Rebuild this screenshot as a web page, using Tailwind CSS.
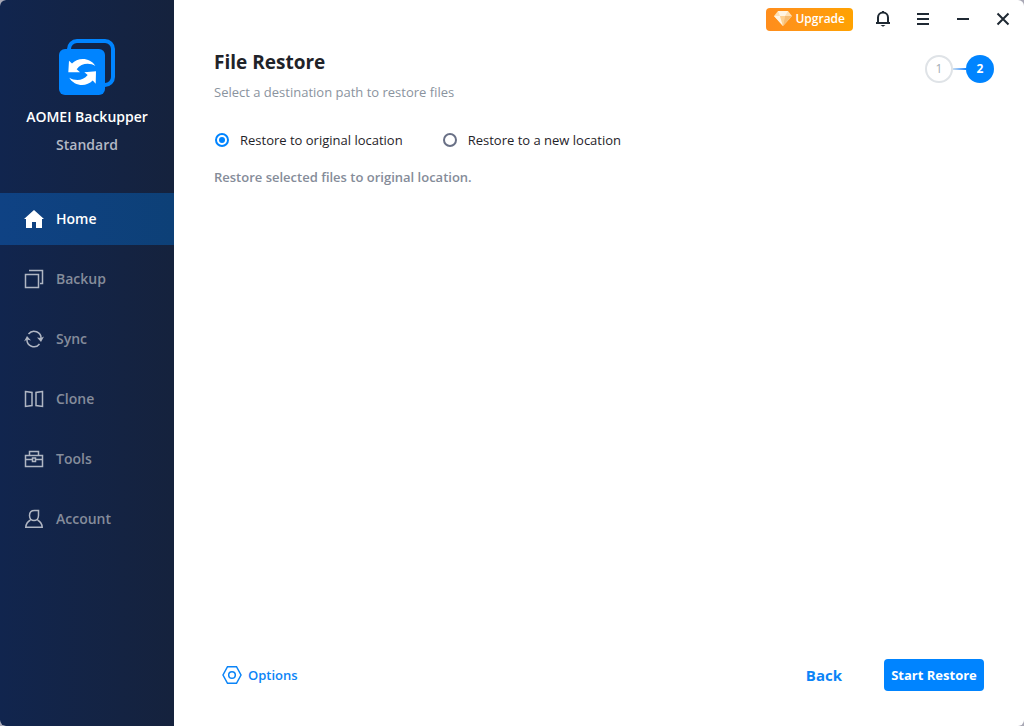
<!DOCTYPE html>
<html lang="en">
<head>
  <meta charset="UTF-8">
  <meta name="viewport" content="width=device-width, initial-scale=1">
  <title>AOMEI Backupper Standard</title>
  <script src="https://cdn.jsdelivr.net/npm/@tailwindcss/browser@4"></script>
</head>
<body class="bg-[#a9a8b5] font-['Open_Sans','Noto_Sans',sans-serif] text-sm text-[#1f2329]">
  <div class="flex min-h-screen overflow-hidden rounded-md bg-white">

    <!-- Sidebar -->
    <aside class="w-[174px] shrink-0 bg-linear-to-r from-[#11254e] to-[#15223d]">
      <div class="flex h-[193px] flex-col items-center pt-[39px]">
        <svg class="size-14" viewBox="0 0 56 56" aria-hidden="true">
          <rect x="10" y="2" width="44" height="44" rx="8" fill="none" stroke="#0084ff" stroke-width="4"/>
          <rect x="0" y="10" width="46" height="46" rx="6" fill="#0084ff"/>
          <path d="M10 21.7l3 2.8C18 18.500 31 17.500 36.300 27 31 23.500 22 24 17.700 30.300L21 33.300H9.300z" fill="#fff"/>
          <path d="M37 32.300L36.700 44.700 33.700 41.500C27 48.500 15 47 10.300 38.700 16 42 24 42 28.700 36L25.300 33.300z" fill="#fff"/>
        </svg>
        <p class="mt-3 font-semibold leading-5 text-white">AOMEI Backupper</p>
        <p class="mt-2 font-semibold leading-5 text-[#b3b9c5]">Standard</p>
      </div>

      <nav class="flex flex-col gap-2 font-semibold text-[#858c9b]">
        <a href="#" class="flex h-[52px] items-center gap-3 bg-linear-to-r from-[#0f4284] to-[#0d4077] pl-6 text-white" aria-current="page">
          <svg class="size-5" viewBox="0 0 20 20" fill="currentColor" aria-hidden="true"><path d="M10 1L0 10h2v9h6v-6h4v6h6v-9h2z"/></svg>
          Home
        </a>
        <a href="#" class="flex h-[52px] items-center gap-3 pl-6">
          <svg class="size-5 text-[#b0b6c3]" viewBox="0 0 20 20" fill="none" stroke="currentColor" aria-hidden="true"><path d="M1.500 5.500h13v13h-13zM5 1.500h13.500V14.500H16" stroke-width="1.500"/></svg>
          Backup
        </a>
        <a href="#" class="flex h-[52px] items-center gap-3 pl-6">
          <svg class="size-5 text-[#b0b6c3]" viewBox="0 0 20 20" fill="none" stroke="currentColor" aria-hidden="true"><path d="M4.500 5A7 7 0 0 1 17 10M15.500 15A7 7 0 0 1 3 10" stroke-width="1.500"/><path d="M13 8.500L17 13 20 7.500 17 9zM0 12.500L3 7 7 11.500 3 10.500z" fill="currentColor" stroke="none"/></svg>
          Sync
        </a>
        <a href="#" class="flex h-[52px] items-center gap-3 pl-6">
          <svg class="size-5 text-[#b0b6c3]" viewBox="0 0 20 20" fill="none" stroke="currentColor" aria-hidden="true"><path d="M1.500 2.500l6.500 1v13l-6.500 1zM18.500 2.500l-6.500 1v13l6.500 1z" stroke-width="1.500"/></svg>
          Clone
        </a>
        <a href="#" class="flex h-[52px] items-center gap-3 pl-6">
          <svg class="size-5 text-[#b0b6c3]" viewBox="0 0 20 20" fill="none" stroke="currentColor" aria-hidden="true"><path d="M1.500 6.500h17v11h-17zM5.500 6V2.500h9V6M2 10.500h6M12 10.500h6M8.500 9h3v3.500h-3z" stroke-width="1.500"/></svg>
          Tools
        </a>
        <a href="#" class="flex h-[52px] items-center gap-3 pl-6">
          <svg class="size-5 text-[#b0b6c3]" viewBox="0 0 20 20" fill="none" stroke="currentColor" aria-hidden="true"><path d="M14.500 1.500v5c0 3-2 5-4.500 5s-4.500-2-4.500-5 2-5 5-5zM6.500 11C3.500 12.500 2 15 1.800 18.300h16.400C18 15 16.500 12.500 13.500 11" stroke-width="1.500"/></svg>
          Account
        </a>
      </nav>
    </aside>

    <div class="flex min-w-0 flex-1 flex-col">
      <!-- Title bar -->
      <header class="flex h-[38px] items-center justify-end gap-5 pr-[11px]">
        <button class="flex h-[23px] items-center gap-[3px] rounded bg-linear-to-r from-[#ff8d1c] to-[#ffa200] px-2 text-xs font-semibold text-white">
          <svg class="h-[18px] w-[18px]" viewBox="0 0 18 18" aria-hidden="true">
            <path d="M4 1h10l4 5-9 10L0 6z" fill="#ffe0b3"/>
            <path d="M4 1h10l-3 5H6zM0 6h6l3 10z" fill="#fff4e3"/>
            <path d="M6 6h5L9 16z" fill="#ffd08f"/>
            <path d="M11 6h7L9 16z" fill="#f7bd74"/>
          </svg>
          Upgrade
        </button>
        <button class="size-5" aria-label="Notifications">
          <svg class="size-5" viewBox="0 0 20 20" fill="none" stroke="#1f2933" stroke-width="2" aria-hidden="true"><path d="M3 14h14M5 14V8.500a5 5 0 0 1 10 0V14M10 2v1.500"/><path d="M7.500 16h5l-2.500 1.800z" fill="#1f2933" stroke="none"/></svg>
        </button>
        <button class="size-5" aria-label="Menu">
          <svg class="size-5" viewBox="0 0 20 20" stroke="#1f2933" stroke-width="2" aria-hidden="true"><path d="M4 5h12M4 10h12M4 15h12"/></svg>
        </button>
        <button class="size-5" aria-label="Minimize">
          <svg class="size-5" viewBox="0 0 20 20" stroke="#1f2933" stroke-width="2" aria-hidden="true"><path d="M4 10h12"/></svg>
        </button>
        <button class="size-5" aria-label="Close">
          <svg class="size-5" viewBox="0 0 20 20" stroke="#1f2933" stroke-width="2" aria-hidden="true"><path d="M4.500 4.500l11 11M15.500 4.500l-11 11"/></svg>
        </button>
      </header>

      <main class="flex flex-1 flex-col pl-10">
        <div class="flex items-start justify-between pt-3 pr-[30px]">
          <div>
            <h1 class="text-[19px] leading-6 font-bold">File Restore</h1>
            <p class="mt-2 text-[13px] leading-5 text-[#8a939e]">Select a destination path to restore files</p>
          </div>
          <ol class="flex items-center pt-[5px] text-xs">
            <li class="flex size-7 items-center justify-center rounded-full border-2 border-[#dfe3e7] text-[#a3abb3]">1</li>
            <li class="h-[2px] w-[13px] bg-linear-to-r from-[#c5dcf0] to-[#0084ff]" aria-hidden="true"></li>
            <li class="flex size-7 items-center justify-center rounded-full bg-[#0084ff] font-bold text-white" aria-current="step">2</li>
          </ol>
        </div>

        <div class="mt-7 flex gap-10 pl-px text-[13px] leading-5">
          <label class="flex items-center gap-[11px]">
            <input type="radio" name="location" checked class="size-3.5 appearance-none rounded-full border-2 border-[#697086] bg-white checked:border-[#0084ff] checked:bg-[#0084ff] checked:bg-clip-content checked:p-[2px]">
            Restore to original location
          </label>
          <label class="flex items-center gap-[11px]">
            <input type="radio" name="location" class="size-3.5 appearance-none rounded-full border-2 border-[#697086] bg-white checked:border-[#0084ff] checked:bg-[#0084ff] checked:bg-clip-content checked:p-[2px]">
            Restore to a new location
          </label>
        </div>
        <p class="mt-[17px] text-[13px] leading-5 font-semibold text-[#858c99]">Restore selected files to original location.</p>

        <footer class="mt-auto flex items-center pr-10 pb-[35px] pl-2">
          <button class="flex items-center gap-1.5 text-[13px] font-semibold text-[#0b84f7]">
            <svg class="size-5" viewBox="0 0 20 20" fill="none" stroke="currentColor" stroke-width="1.500" aria-hidden="true"><path d="M5.500 1.700h9L19 10l-4.500 8.300h-9L1 10z"/><circle cx="10" cy="10" r="3.300"/></svg>
            Options
          </button>
          <button class="ml-auto pt-0.5 text-[15px] font-bold text-[#0b84f7]">Back</button>
          <button class="ml-[42px] h-8 w-[100px] rounded bg-[#0084ff] pt-px text-[13px] font-bold text-white">Start Restore</button>
        </footer>
      </main>
    </div>
  </div>
</body>
</html>
